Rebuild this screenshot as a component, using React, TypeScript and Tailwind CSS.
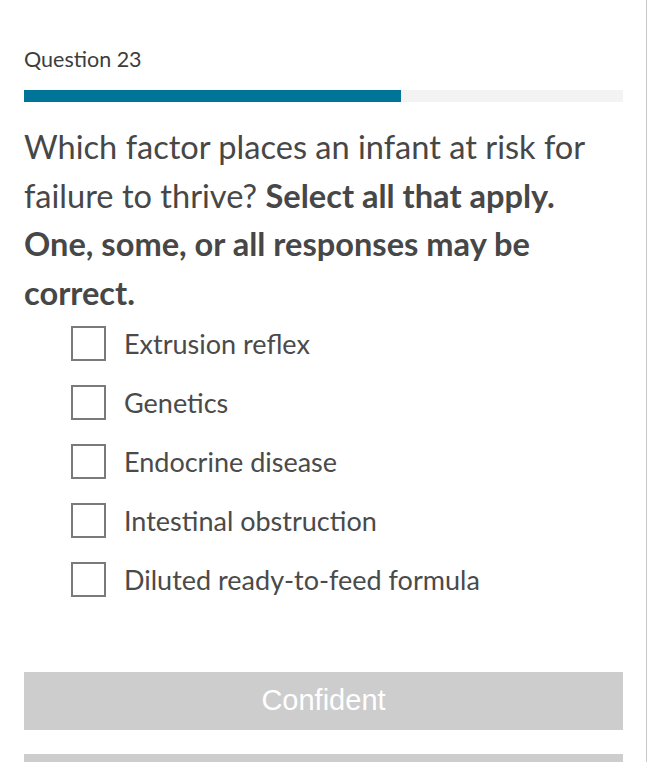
import React, { useState } from 'react';

const options = [
  'Extrusion reflex',
  'Genetics',
  'Endocrine disease',
  'Intestinal obstruction',
  'Diluted ready-to-feed formula',
];

export default function App() {
  const [checked, setChecked] = useState<boolean[]>(options.map(() => false));

  const toggle = (i: number) =>
    setChecked(checked.map((c, idx) => (idx === i ? !c : c)));

  return (
    <div className="w-[647px] h-[762px] overflow-hidden bg-white border-r border-[#c8c8c8] font-['Lato',sans-serif] text-[#444]">
      <div className="pl-6 pr-[23px] pt-[45px]">
        <div className="text-[21.5px] leading-[28px] text-[#3d3d3d]">Question 23</div>

        <div className="mt-[17px] h-[12px] w-full bg-[#f3f3f3]">
          <div className="h-full w-[63%] bg-[#007499]" />
        </div>

        <p className="mt-[21px] text-[32.6px] leading-[48.5px] text-[#474747]">
          Which factor places an infant at risk for failure to thrive?{' '}
          <strong className="font-bold">
            Select all that apply.
            <br />
            One, some, or all responses may be correct.
          </strong>
        </p>

        <div className="mt-[9px] pl-[47px] flex flex-col gap-[24px]">
          {options.map((opt, i) => (
            <label key={opt} className="flex items-center gap-[18px] cursor-pointer" onClick={() => toggle(i)}>
              <span className="w-[35px] h-[35px] border-2 border-[#7a7a7a] flex items-center justify-center shrink-0">
                {checked[i] && (
                  <svg viewBox="0 0 24 24" className="w-6 h-6" fill="none" stroke="#555" strokeWidth="3">
                    <path d="M5 12l5 5 9-10" />
                  </svg>
                )}
              </span>
              <span className="text-[27px] leading-[35px] text-[#4a4a4a]">{opt}</span>
            </label>
          ))}
        </div>

        <button className="mt-[75px] w-full h-[58px] bg-[#cdcdcd] text-white text-[29px] font-['Liberation_Sans',sans-serif]">
          Confident
        </button>
        <div className="mt-[24px] w-full h-[58px] bg-[#cdcdcd]" />
      </div>
    </div>
  );
}
